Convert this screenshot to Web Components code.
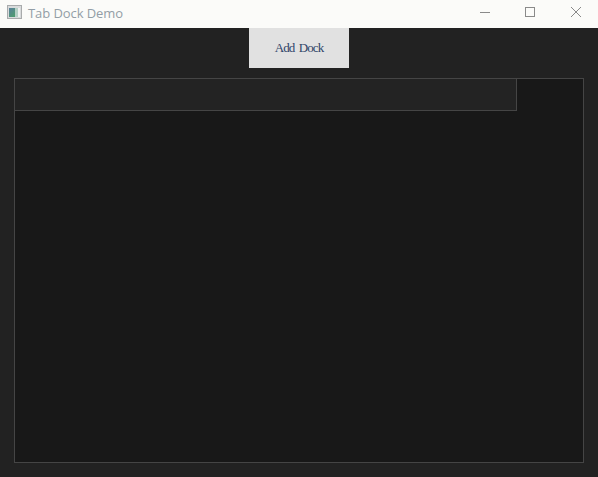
<!DOCTYPE html>
<html>
<head>
<meta charset="utf-8">
<title>Tab Dock Demo</title>
<style>
  html, body { margin: 0; height: 100%; background: #222222; overflow: hidden; }
</style>
</head>
<body>
<dock-window title-text="Tab Dock Demo">
  <dock-button>Add Dock</dock-button>
  <dock-area></dock-area>
</dock-window>

<script>
class DockWindow extends HTMLElement {
  constructor() {
    super();
    this.attachShadow({ mode: 'open' });
    this.shadowRoot.innerHTML = `
      <style>
        :host {
          display: flex;
          flex-direction: column;
          width: 598px;
          height: 477px;
          background: #222222;
        }
        .titlebar {
          height: 28px;
          flex: none;
          background: #fbfbf9;
          display: flex;
          align-items: center;
        }
        .app-icon {
          margin-left: 7px;
          margin-right: 6px;
          margin-top: -4px;
          flex: none;
        }
        .title {
          flex: 1;
          font: 13px "Open Sans", sans-serif;
          letter-spacing: -0.08px;
          color: #939ea6;
          margin-top: -3px;
          white-space: nowrap;
        }
        .controls {
          display: flex;
          margin-top: -4px;
        }
        .controls svg { display: block; }
        .content {
          flex: 1;
          display: flex;
          flex-direction: column;
          align-items: center;
          padding: 0 14px 14px;
          min-height: 0;
        }
      </style>
      <div class="titlebar">
        <svg class="app-icon" width="15" height="14" viewBox="0 0 15 14">
          <defs>
            <linearGradient id="pane" x1="0" y1="0" x2="0.6" y2="1">
              <stop offset="0" stop-color="#5a7f9c"/>
              <stop offset="1" stop-color="#4f9a72"/>
            </linearGradient>
          </defs>
          <rect x="0.5" y="0.5" width="14" height="13" fill="#d9dbdc" stroke="#a9abac"/>
          <rect x="2" y="3" width="6" height="9" fill="url(#pane)"/>
          <rect x="8" y="3" width="3" height="9" fill="#b4cfc4"/>
          <rect x="11" y="3" width="2" height="9" fill="#eef0ef"/>
        </svg>
        <span class="title">${this.getAttribute('title-text') || ''}</span>
        <div class="controls">
          <svg width="138" height="24" viewBox="0 0 138 24" fill="none" stroke="#8a8a8a" stroke-width="1">
            <path d="M20 12.5H30"/>
            <rect x="65.5" y="7.5" width="9" height="9"/>
            <path d="M111 7L121 17M121 7L111 17"/>
          </svg>
        </div>
      </div>
      <div class="content"><slot></slot></div>
    `;
  }
}

class DockButton extends HTMLElement {
  constructor() {
    super();
    this.attachShadow({ mode: 'open' });
    this.shadowRoot.innerHTML = `
      <style>
        :host {
          display: flex;
          flex: none;
          align-items: center;
          justify-content: center;
          width: 100px;
          height: 40px;
          margin-bottom: 10px;
          background: #e1e1e1;
          color: #2f4468;
          font: 13px "Liberation Serif", serif;
          letter-spacing: -0.9px;
          word-spacing: 2px;
          cursor: default;
        }
      </style>
      <slot></slot>
    `;
  }
}

class DockArea extends HTMLElement {
  constructor() {
    super();
    this.attachShadow({ mode: 'open' });
    this.shadowRoot.innerHTML = `
      <style>
        :host {
          display: flex;
          flex-direction: column;
          align-self: stretch;
          flex: 1;
          min-height: 0;
          background: #181818;
          border: 1px solid #454545;
        }
        .tabbar {
          width: 502px;
          height: 32px;
          box-sizing: border-box;
          background: #232323;
          border-right: 1px solid #454545;
          border-bottom: 1px solid #454545;
        }
      </style>
      <div class="tabbar"></div>
    `;
  }
}

customElements.define('dock-window', DockWindow);
customElements.define('dock-button', DockButton);
customElements.define('dock-area', DockArea);
</script>
</body>
</html>
